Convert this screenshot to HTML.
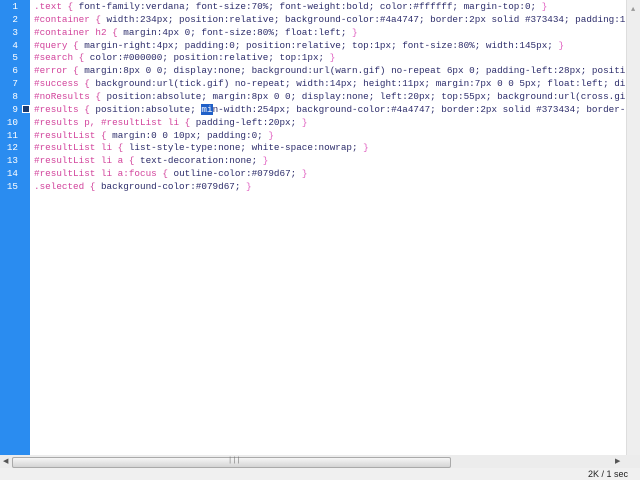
<!DOCTYPE html>
<html><head><style>
body{margin:0;width:640px;height:480px;overflow:hidden;background:#f0f0f0;font-family:"Liberation Mono",monospace;}
#gut{position:absolute;left:0;top:0;width:30px;height:455px;background:#2a8cf0;}
#ed{position:absolute;left:30px;top:0;width:596px;height:455px;background:#fff;overflow:hidden;}
.ln{position:absolute;left:0;width:18px;text-align:right;color:#fff;font-size:9.3px;}
.l{position:absolute;left:4px;white-space:pre;font-size:9.3px;color:#2c2c6a;}
.s{color:#d2449c}.b{color:#e060c0}
#vs{position:absolute;left:626px;top:0;width:14px;height:455px;background:#eee;border-left:1px solid #ddd;}
#hs{position:absolute;left:0;top:455px;width:640px;height:13px;background:#ececec;}
#th{position:absolute;left:12px;top:457px;width:437px;height:9px;background:linear-gradient(#f6f6f6,#d4d4d4);border:1px solid #aaa;border-radius:2px;}
#st{position:absolute;right:12px;top:469px;font-family:"Liberation Sans",sans-serif;font-size:9px;color:#222;}
.sel{background:#2060c8;color:#fff}
</style></head><body>
<div id="gut"></div>
<div id="ed"></div>
<div id="vs"></div><div id="hs"></div><div id="th"></div>
<div style="position:absolute;left:631px;top:6px;font-size:7px;color:#999">▲</div>
<div style="position:absolute;left:3px;top:457px;font-size:7px;color:#555">◀</div>
<div style="position:absolute;left:615px;top:457px;font-size:7px;color:#555">▶</div>
<div style="position:absolute;left:228px;top:457px;font-size:7px;color:#777">|||</div>
<div id="st">2K / 1 sec</div>
<div style="position:absolute;left:22px;top:105px;width:6px;height:6px;border:1px solid #fff;background:#1a3a70"></div>
<div id="lines"></div>
<script>
var L=[
['.text','font-family:verdana; font-size:70%; font-weight:bold; color:#ffffff; margin-top:0; ',1],
['#container','width:234px; position:relative; background-color:#4a4747; border:2px solid #373434; padding:1',0],
['#container h2','margin:4px 0; font-size:80%; float:left; ',1],
['#query','margin-right:4px; padding:0; position:relative; top:1px; font-size:80%; width:145px; ',1],
['#search','color:#000000; position:relative; top:1px; ',1],
['#error','margin:8px 0 0; display:none; background:url(warn.gif) no-repeat 6px 0; padding-left:28px; positi',0],
['#success','background:url(tick.gif) no-repeat; width:14px; height:11px; margin:7px 0 0 5px; float:left; di',0],
['#noResults','position:absolute; margin:8px 0 0; display:none; left:20px; top:55px; background:url(cross.gi',0],
['#results','position:absolute; <span class="sel">mi</span>n-width:254px; background-color:#4a4747; border:2px solid #373434; border-',0],
['#results p, #resultList li','padding-left:20px; ',1],
['#resultList','margin:0 0 10px; padding:0; ',1],
['#resultList li','list-style-type:none; white-space:nowrap; ',1],
['#resultList li a','text-decoration:none; ',1],
['#resultList li a:focus','outline-color:#079d67; ',1],
['.selected','background-color:#079d67; ',1]];
var h='';
for(var i=0;i<L.length;i++){var y=1+i*12.86;
h+='<div class="ln" style="top:'+y+'px">'+(i+1)+'</div>';
h+='<div class="l" style="left:34px;top:'+y+'px"><span class="s">'+L[i][0]+' { </span>'+L[i][1]+(L[i][2]?'<span class="b">}</span>':'')+'</div>';}
document.getElementById('lines').innerHTML=h;
</script>
</body></html>
